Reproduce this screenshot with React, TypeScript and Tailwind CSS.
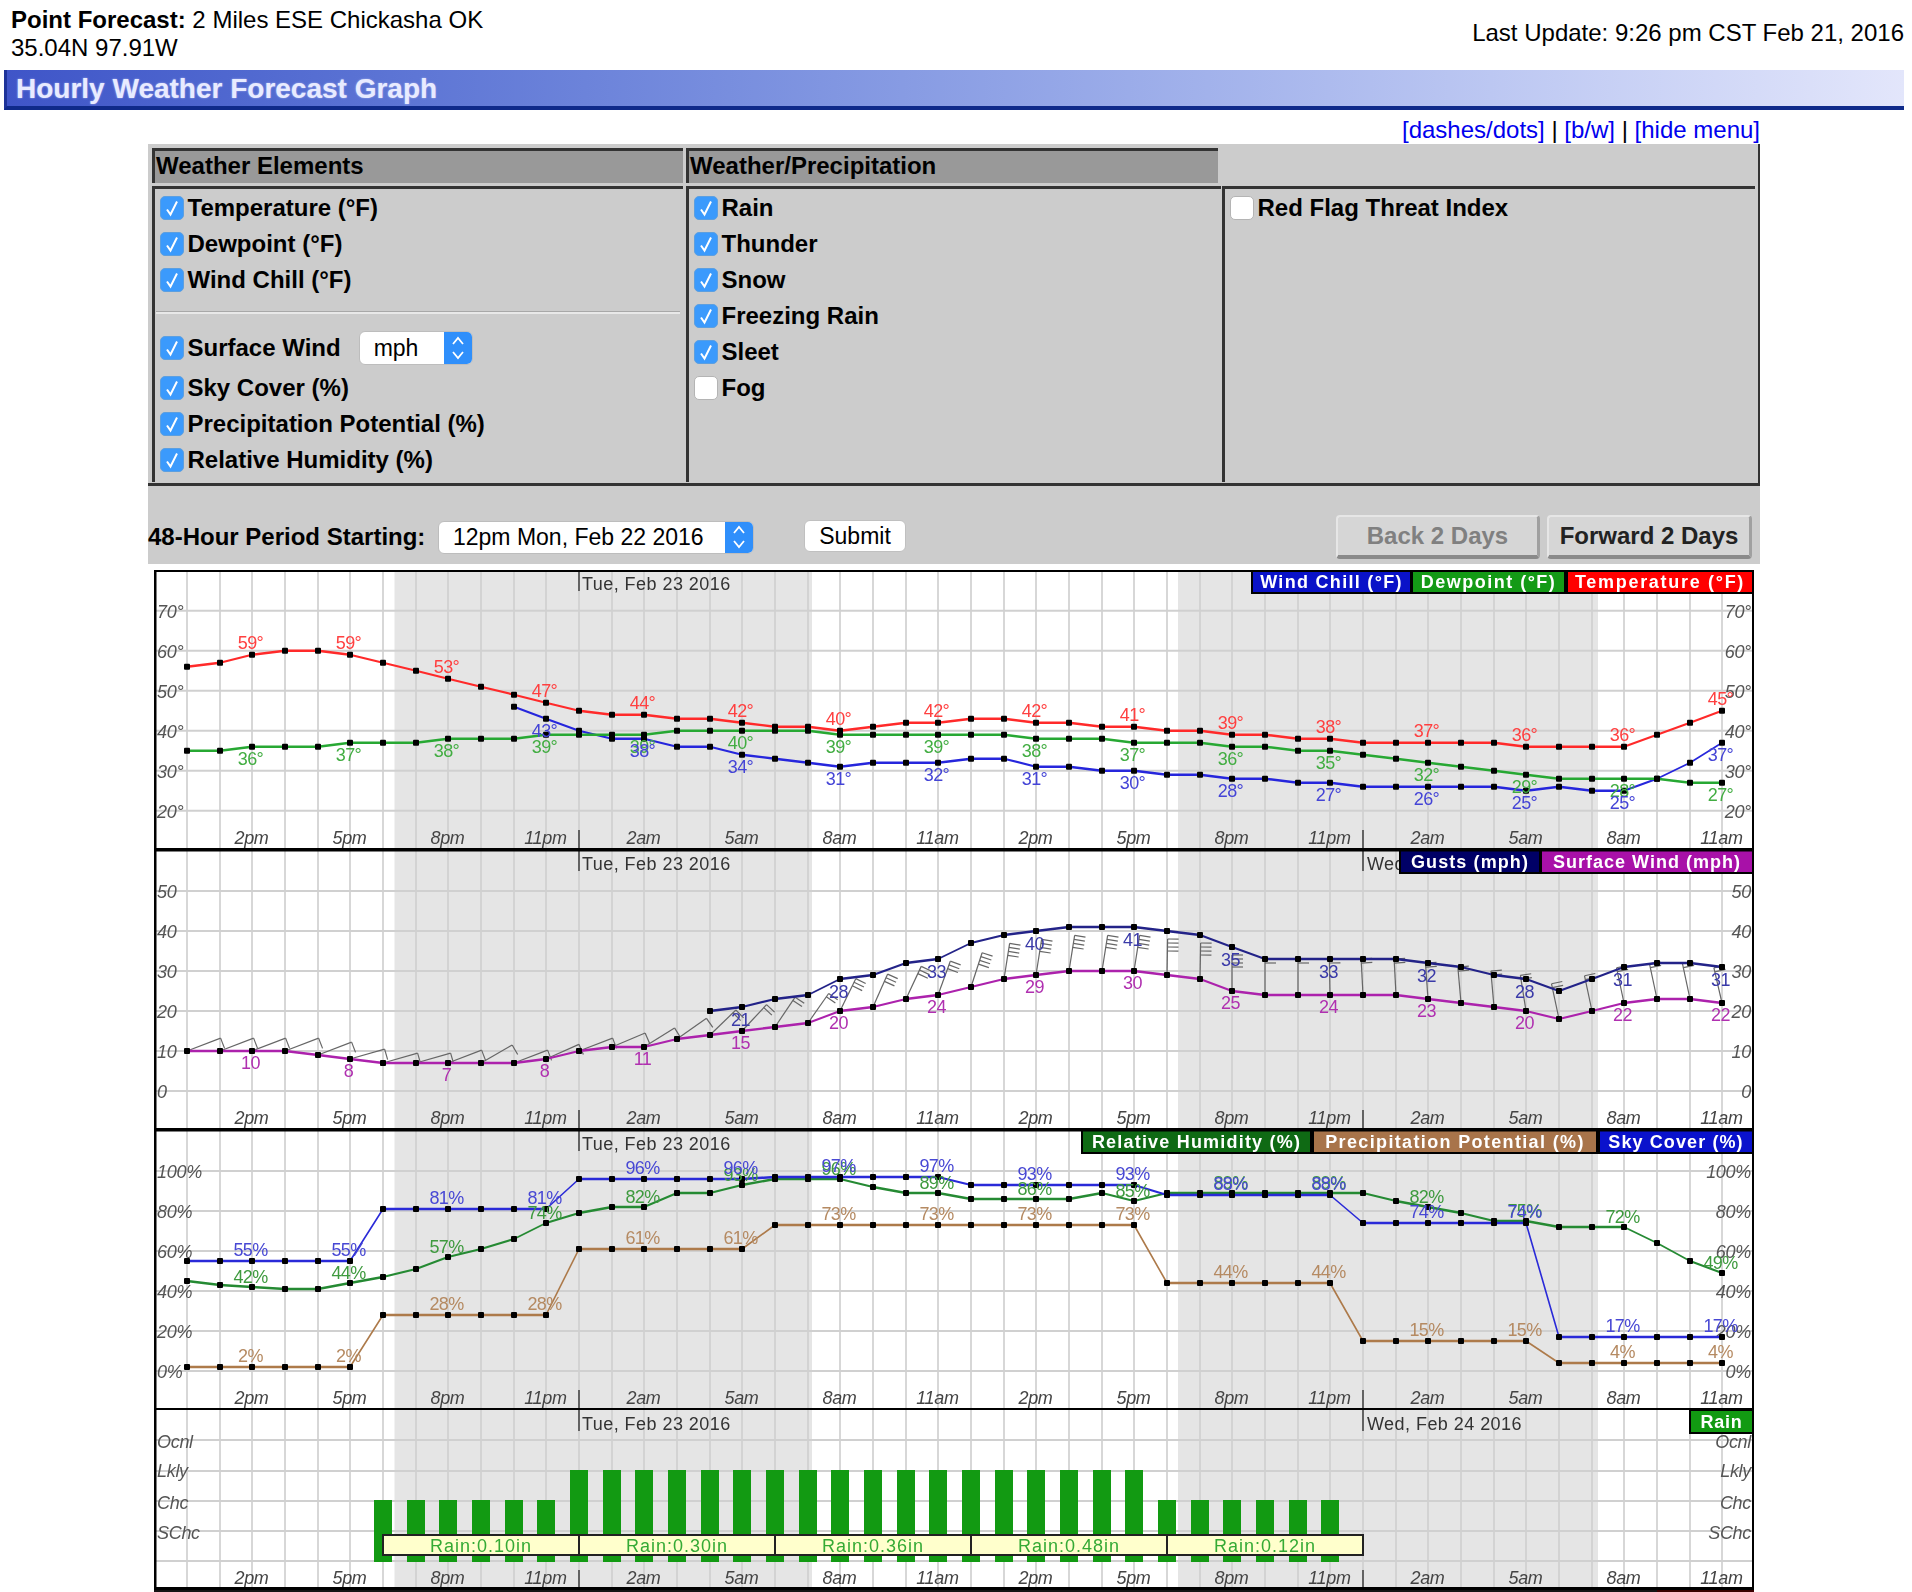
import React from "react";

const X = (i: number) => Math.round(187 + i * 32.67);
const HOURS = Array.from({ length: 48 }, (_, i) => i);
const LABEL_HOURS = HOURS.filter((i) => i % 3 === 2);
const TIME = ["2pm", "5pm", "8pm", "11pm", "2am", "5am", "8am", "11am", "2pm", "5pm", "8pm", "11pm", "2am", "5am", "8am", "11am"];

const temp = [56,57,59,60,60,59,57,55,53,51,49,47,45,44,44,43,43,42,41,41,40,41,42,42,43,43,42,42,41,41,40,40,39,39,38,38,37,37,37,37,37,36,36,36,36,39,42,45];
const dew = [35,35,36,36,36,37,37,37,38,38,38,39,39,39,39,40,40,40,40,40,39,39,39,39,39,39,38,38,38,37,37,37,36,36,35,35,34,33,32,31,30,29,28,28,28,28,27,27];
const chill = [null,null,null,null,null,null,null,null,null,null,46,43,40,38,38,36,36,34,33,32,31,32,32,32,33,33,31,31,30,30,29,29,28,28,27,27,26,26,26,26,26,25,26,25,25,28,32,37];
const wind = [10,10,10,10,9,8,7,7,7,7,7,8,10,11,11,13,14,15,16,17,20,21,23,24,26,28,29,30,30,30,29,28,25,24,24,24,24,24,23,22,21,20,18,20,22,23,23,22];
const gust = [null,null,null,null,null,null,null,null,null,null,null,null,null,null,null,null,20,21,23,24,28,29,32,33,37,39,40,41,41,41,40,39,36,33,33,33,33,33,32,31,29,28,25,28,31,32,32,31];
const barbAngle = [69,69,69,69,69,74,74,74,69,60,69,66,69,67,58,55,46,43,34,35,26,24,25,20,18,9,9,9,9,9,1,1,0,0,0,-1,-3,-3,-4,-5,-5,-9,-12,-12,-12,-12,-12,-13];
const sky = [55,55,55,55,55,55,81,81,81,81,81,81,96,96,96,96,96,96,97,97,97,97,97,97,93,93,93,93,93,93,88,88,88,88,88,88,74,74,74,74,74,74,17,17,17,17,17,17];
const rh = [45,43,42,41,41,44,47,51,57,61,66,74,79,82,82,89,89,93,96,96,96,92,89,89,86,86,86,86,89,85,89,89,89,89,89,89,89,85,82,79,75,75,72,72,72,64,55,49];
const precip = [2,2,2,2,2,2,28,28,28,28,28,28,61,61,61,61,61,61,73,73,73,73,73,73,73,73,73,73,73,73,44,44,44,44,44,44,15,15,15,15,15,15,4,4,4,4,4,4];

type Series = (number | null)[];

function Line({ data, y, color }: { data: Series; y: (v: number) => number; color: string }) {
  return (
    <>
      {data.map((v, i) => {
        const next = data[i + 1];
        if (v === null || next === null || next === undefined) return null;
        const dx = X(i + 1) - X(i);
        const dy = Math.abs(y(next) - y(v));
        const w = Math.max(1.6, 2.6 - (1.6 * dy) / dx);
        return <line key={i} x1={X(i)} y1={y(v)} x2={X(i + 1)} y2={y(next)} stroke={color} strokeWidth={w} strokeLinecap="round" />;
      })}
      {data.map((v, i) =>
        v === null ? null : <rect key={i} x={X(i) - 3} y={y(v) - 3} width={6} height={6} rx={1} fill="#000" />
      )}
    </>
  );
}

function Values({ data, y, color, dy, suffix = "" }: { data: Series; y: (v: number) => number; color: string; dy: number; suffix?: string }) {
  return (
    <>
      {LABEL_HOURS.map((i) => {
        const v = data[i];
        if (v === null) return null;
        return (
          <text key={i} x={X(i) - 1.5} y={y(v) + dy} textAnchor="middle" fontSize={18} letterSpacing={-0.6} fill={color}>
            {v}
            {suffix}
          </text>
        );
      })}
    </>
  );
}

function Legend({ x, w, bottom, top, fill, label, spacing }: { x: number; w: number; top: number; bottom: number; fill: string; label: string; spacing: number }) {
  return (
    <>
      <rect x={x} y={top} width={w} height={bottom - top} fill={fill} />
      <text x={x + w / 2} y={top === 572 ? top + 15.5 : top + 17} textAnchor="middle" fontSize={18} fontWeight="bold" letterSpacing={spacing} fill="#fff">
        {label}
      </text>
    </>
  );
}

function Frame({ top, height, plotBottom, gridY, children, wed = false }: { top: number; height: number; plotBottom: number; gridY: number[]; children: React.ReactNode; wed?: boolean }) {
  const axis = plotBottom - 6;
  return (
    <svg width={1600} height={height} viewBox={`154 ${top} 1600 ${height}`} className="block blur-[0.55px]" fontFamily="'Liberation Sans', Arial, sans-serif">
      <rect x={154} y={top} width={1600} height={height} fill="#fff" />
      <rect x={394.5} y={top} width={417.5} height={plotBottom - top} fill="#e5e5e5" />
      <rect x={1178} y={top} width={420} height={plotBottom - top} fill="#e5e5e5" />
      {HOURS.map((i) => (
        <line key={i} x1={X(i)} x2={X(i)} y1={top} y2={plotBottom} stroke="#d0d0d0" strokeWidth={1.7} />
      ))}
      {gridY.map((g) => (
        <line key={g} x1={156} x2={1752} y1={g} y2={g} stroke="#d0d0d0" strokeWidth={2} />
      ))}
      {[579, 1363].map((x, k) =>
        k === 0 || wed ? <line key={x} x1={x} x2={x} y1={top} y2={top + 21} stroke="#333" strokeWidth={1.4} /> : null
      )}
      {[579, 1363].map((x) => (
        <line key={x} x1={x} x2={x} y1={axis - 14} y2={plotBottom} stroke="#333" strokeWidth={1.4} />
      ))}
      <text x={582} y={top + 19.5} fontSize={18} letterSpacing={0.45} fill="#333">
        Tue, Feb 23 2016
      </text>
      {LABEL_HOURS.map((i, k) => (
        <text key={i} x={X(i) - 0.5} y={axis} textAnchor="middle" fontSize={18} fontStyle="italic" letterSpacing={-0.3} fill="#444">
          {TIME[k]}
        </text>
      ))}
      {children}
    </svg>
  );
}

function Borders({ top, height, last = false }: { top: number; height: number; last?: boolean }) {
  const bottom = top + height;
  return (
    <>
      <rect x={154} y={top} width={2.5} height={last ? 180 : height} fill="#000" />
      <rect x={1752} y={top} width={2} height={last ? 180 : height} fill="#000" />
      {last ? (
        <>
          <rect x={154} y={1587} width={1600} height={3} fill="#000" />
          <rect x={154} y={1590} width={1503} height={2} fill="#141414" />
          <rect x={1657} y={1590} width={97} height={2} fill="#3a0000" />
        </>
      ) : (
        <rect x={154} y={bottom - 2} width={1600} height={2} fill="#000" />
      )}
      {!last && <rect x={154} y={top} width={1600} height={top === 570 ? 2 : 1.5} fill="#000" />}
    </>
  );
}

function AxisLabels({ items, dy = 7 }: { items: [string, number][]; dy?: number }) {
  return (
    <>
      {items.map(([t, y]) => (
        <g key={t}>
          <text x={157} y={y + dy} fontSize={18} fontStyle="italic" letterSpacing={-0.3} fill="#555">
            {t}
          </text>
          <text x={1751} y={y + dy} textAnchor="end" fontSize={18} fontStyle="italic" letterSpacing={-0.3} fill="#555">
            {t}
          </text>
        </g>
      ))}
    </>
  );
}

function Barb({ i }: { i: number }) {
  const speed = wind[i];
  const a = (barbAngle[i] * Math.PI) / 180;
  const x0 = X(i);
  const y0 = 1091 - 4 * speed;
  const sx = Math.sin(a);
  const cx = Math.cos(a);
  const tipX = x0 + 36 * sx;
  const tipY = y0 - 36 * cx;
  const n = i >= 33 ? 2 : speed >= 25 ? 4 : speed >= 20 ? 3 : speed >= 14 ? 2 : 1;
  return (
    <g stroke="#666" strokeWidth={1.2} fill="none">
      <line x1={x0} y1={y0} x2={tipX} y2={tipY} />
      {Array.from({ length: n }, (_, k) => {
        const bx = tipX - k * 4 * sx;
        const by = tipY + k * 4 * cx;
        return <line key={k} x1={bx} y1={by} x2={bx + 11 * cx} y2={by + 11 * sx} />;
      })}
    </g>
  );
}

function TempChart() {
  const y = (v: number) => 610.7 + (70 - v) * 4;
  return (
    <Frame top={570} height={280} plotBottom={850} gridY={[70, 60, 50, 40, 30, 20].map(y)}>
      <AxisLabels items={[70, 60, 50, 40, 30, 20].map((v) => [`${v}°`, y(v)] as [string, number])} />
      <Line data={chill} y={y} color="#2626dc" />
      <Line data={dew} y={y} color="#27a833" />
      <Line data={temp} y={y} color="#ff2a2a" />
      <Values data={temp} y={y} color="#ff4040" dy={-6} suffix="°" />
      <Values data={dew} y={y} color="#42ad42" dy={18} suffix="°" />
      <Values data={chill} y={y} color="#4444d6" dy={18} suffix="°" />
      <rect x={1251} y={570} width={503} height={24} fill="#000" />
      <Legend x={1253} w={157} top={572} bottom={592} fill="#0a12c8" label="Wind Chill (°F)" spacing={1.3} />
      <Legend x={1413} w={151} top={572} bottom={592} fill="#149a16" label="Dewpoint (°F)" spacing={1.5} />
      <Legend x={1568} w={184} top={572} bottom={592} fill="#ff0000" label="Temperature (°F)" spacing={1.7} />
      <Borders top={570} height={280} />
    </Frame>
  );
}

function WindChart() {
  const y = (v: number) => 1091 - 4 * v;
  return (
    <Frame top={850} height={280} plotBottom={1130} gridY={[50, 40, 30, 20, 10, 0].map(y)} wed>
      <text x={1367} y={869.5} fontSize={18} letterSpacing={0.45} fill="#333">
        Wed
      </text>
      <AxisLabels items={[50, 40, 30, 20, 10, 0].map((v) => [`${v}`, y(v)] as [string, number])} />
      {HOURS.map((i) => (
        <Barb key={i} i={i} />
      ))}
      <Line data={gust} y={y} color="#232388" />
      <Line data={wind} y={y} color="#ac22ac" />
      <Values data={wind} y={y} color="#b030b0" dy={18} />
      {LABEL_HOURS.map((i) => {
        const v = gust[i];
        if (v === null) return null;
        return (
          <text key={i} x={X(i) - 1.5} y={y(v) + 19} textAnchor="middle" fontSize={18} letterSpacing={-0.6} fill="#3a3aa8">
            {i === 32 ? 35 : v}
          </text>
        );
      })}
      <rect x={1399} y={850} width={355} height={24} fill="#000" />
      <Legend x={1401} w={138} top={851} bottom={872} fill="#000066" label="Gusts (mph)" spacing={1.1} />
      <Legend x={1542} w={210} top={851} bottom={872} fill="#a811a8" label="Surface Wind (mph)" spacing={1} />
      <Borders top={850} height={280} />
    </Frame>
  );
}

function HumidityChart() {
  const y = (v: number) => 1371 - 2 * v;
  return (
    <Frame top={1130} height={280} plotBottom={1410} gridY={[100, 80, 60, 40, 20, 0].map(y)}>
      <AxisLabels items={[100, 80, 60, 40, 20, 0].map((v) => [`${v}%`, y(v)] as [string, number])} />
      <Line data={precip} y={y} color="#ad7a4a" />
      <Line data={rh} y={y} color="#258a33" />
      <Line data={sky} y={y} color="#2a2ad8" />
      <Values data={precip} y={y} color="#b58a62" dy={-5} suffix="%" />
      <Values data={rh} y={y} color="#3e9a3e" dy={-4} suffix="%" />
      <Values data={sky} y={y} color="#4848d4" dy={-5} suffix="%" />
      <rect x={1081} y={1130} width={673} height={24} fill="#000" />
      <Legend x={1083} w={227} top={1131} bottom={1152} fill="#0f6a14" label="Relative Humidity (%)" spacing={1.2} />
      <Legend x={1314} w={282} top={1131} bottom={1152} fill="#a8744a" label="Precipitation Potential (%)" spacing={1.35} />
      <Legend x={1600} w={152} top={1131} bottom={1152} fill="#0a12cc" label="Sky Cover (%)" spacing={1.1} />
      <Borders top={1130} height={280} />
    </Frame>
  );
}

function RainChart() {
  const rows: [string, number][] = [["Ocnl", 1441], ["Lkly", 1470], ["Chc", 1502], ["SChc", 1532]];
  const boxes = [
    [383, 579, "Rain:0.10in"],
    [579, 775, "Rain:0.30in"],
    [775, 971, "Rain:0.36in"],
    [971, 1167, "Rain:0.48in"],
    [1167, 1363, "Rain:0.12in"],
  ] as const;
  return (
    <Frame top={1410} height={182} plotBottom={1590} gridY={[1440, 1471, 1501, 1531, 1561]} wed>
      <text x={1367} y={1429.5} fontSize={18} letterSpacing={0.45} fill="#333">
        Wed, Feb 24 2016
      </text>
      <AxisLabels items={rows} />
      {HOURS.filter((i) => i >= 6 && i <= 35).map((i) => {
        const t = i >= 12 && i <= 29 ? 1470 : 1500;
        return <rect key={i} x={X(i) - 9} y={t} width={18} height={1562 - t} fill="#129a12" />;
      })}
      {boxes.map(([a, b, label]) => (
        <g key={a}>
          <rect x={a} y={1535} width={b - a} height={20} fill="#ffffcc" stroke="#222" strokeWidth={2} />
          <text x={(a + b) / 2} y={1551.5} textAnchor="middle" fontSize={18} letterSpacing={1} fill="#35aa35">
            {label}
          </text>
        </g>
      ))}
      <rect x={1689} y={1410} width={65} height={24} fill="#000" />
      <Legend x={1691} w={61} top={1411} bottom={1432} fill="#129a12" label="Rain" spacing={0.7} />
      <Borders top={1410} height={182} last />
    </Frame>
  );
}

function Check({ on = true }: { on?: boolean }) {
  return on ? (
    <span className="w-[24px] h-[24px] mr-[3.5px] shrink-0 rounded-[5px] bg-[#3b9afc] border border-[#5c9fe0] flex items-center justify-center">
      <svg width="18" height="20" viewBox="0 0 18 20" fill="none" stroke="#fff" strokeWidth="2">
        <path d="M4 11.5 L7.5 16.5 L14 3.5" />
      </svg>
    </span>
  ) : (
    <span className="w-[24px] h-[24px] mr-[3.5px] shrink-0 rounded-[5px] bg-white border border-[#b4b4b4]" />
  );
}

function Row({ label, on = true, children }: { label: string; on?: boolean; children?: React.ReactNode }) {
  return (
    <div className="flex items-center h-[36px]">
      <Check on={on} />
      <span className="text-[24px] font-bold text-black leading-[28px] whitespace-nowrap">{label}</span>
      {children}
    </div>
  );
}

function Stepper() {
  return (
    <span className="ml-auto w-[28px] h-full shrink-0 bg-[#2f8ffb] flex items-center justify-center">
      <svg width="14" height="26" viewBox="0 0 14 26" fill="none" stroke="#fff" strokeWidth="1.8">
        <path d="M2 9 L7 3 L12 9" />
        <path d="M2 17 L7 23 L12 17" />
      </svg>
    </span>
  );
}

export default function App() {
  return (
    <div className="w-[1912px] h-[1592px] overflow-hidden bg-white text-black font-['Liberation_Sans',Arial,sans-serif]">
      <header className="flex justify-between h-[70px] pt-[6px] pl-[11px] pr-[8px] text-[24px] leading-[28px]">
        <div>
          <div>
            <b>Point Forecast:</b> 2 Miles ESE Chickasha OK
          </div>
          <div>35.04N 97.91W</div>
        </div>
        <div className="pt-[13px]">Last Update: 9:26 pm CST Feb 21, 2016</div>
      </header>

      <div className="ml-[4px] w-[1900px] h-[40px] border-b-[4px] border-l-[3px] border-b-[#0f2a8a] border-l-[#1e3399] bg-gradient-to-r from-[#3f55c8] to-[#e3e6fb] pl-[9px] text-[28px] leading-[38px] font-bold text-[#e8ebff] [text-shadow:0_0_2px_#aab4ee]">
        Hourly Weather Forecast Graph
      </div>

      <div className="w-[1760px] h-[34px] pt-[6px] text-right text-[24px] leading-[28px]">
        <a className="text-[#0000ee]">[dashes/dots]</a> | <a className="text-[#0000ee]">[b/w]</a> | <a className="text-[#0000ee]">[hide menu]</a>
      </div>

      <section className="ml-[148px] w-[1612px] h-[420px] bg-[#cccccc]">
        <div className="h-[342px] pt-[4px] pl-[4px] border-b-[3px] border-r-[2px] border-[#333333] grid grid-cols-[534px_536px_1fr]">
          <div className="flex flex-col h-[334px]">
            <div className="h-[35px] mr-[3px] border-t-[3px] border-l-[3px] border-[#333333] bg-[#999999] pl-[1px] text-[24px] leading-[30px] font-bold">Weather Elements</div>
            <div className="mt-[3px] mr-[3px] h-[296px] border-t-[3px] border-l-[3px] border-[#333333] pl-[5px] pt-[1px]">
              <Row label="Temperature (°F)" />
              <Row label="Dewpoint (°F)" />
              <Row label="Wind Chill (°F)" />
              <div className="mt-[13px] -ml-[4px] mr-[3px] h-[3px] border-t border-[#a8a8a8] bg-[#e8e8e8]" />
              <div className="mt-[16px]">
                <Row label="Surface Wind">
                  <div className="ml-[18px] w-[114px] h-[34px] rounded-[6px] bg-white border border-[#bdbdbd] overflow-hidden flex items-center pl-[14px] text-[23px] leading-[28px]">
                    mph
                    <Stepper />
                  </div>
                </Row>
              </div>
              <div className="mt-[4px]">
                <Row label="Sky Cover (%)" />
                <Row label="Precipitation Potential (%)" />
                <Row label="Relative Humidity (%)" />
              </div>
            </div>
          </div>

          <div className="flex flex-col h-[334px]">
            <div className="h-[35px] mr-[4px] border-t-[3px] border-l-[3px] border-[#333333] bg-[#999999] pl-[1px] text-[24px] leading-[30px] font-bold">Weather/Precipitation</div>
            <div className="mt-[3px] mr-[1px] h-[296px] border-t-[3px] border-l-[3px] border-[#333333] pl-[5px] pt-[1px]">
              <Row label="Rain" />
              <Row label="Thunder" />
              <Row label="Snow" />
              <Row label="Freezing Rain" />
              <Row label="Sleet" />
              <Row label="Fog" on={false} />
            </div>
          </div>

          <div className="flex flex-col h-[334px]">
            <div className="h-[35px]" />
            <div className="mt-[3px] mr-[3px] h-[296px] border-t-[3px] border-l-[3px] border-[#333333] pl-[5px] pt-[1px]">
              <Row label="Red Flag Threat Index" on={false} />
            </div>
          </div>
        </div>

        <div className="flex items-center mt-[29px] h-[44px] pr-[8px]">
          <span className="text-[24px] font-bold leading-[28px] whitespace-nowrap w-[290px]">48-Hour Period Starting:</span>
          <div className="w-[316px] h-[33px] rounded-[6px] bg-white border border-[#bdbdbd] overflow-hidden flex items-center pl-[14px] text-[23px] leading-[28px]">
            12pm Mon, Feb 22 2016
            <Stepper />
          </div>
          <button className="ml-[50px] w-[102px] h-[32px] -mt-[2px] rounded-[6px] bg-white border border-[#c0c0c0] text-[23px] leading-[28px]">Submit</button>
          <button className="ml-auto w-[204px] h-[44px] rounded-[4px] bg-[#d6d6d6] border-t-[2px] border-l-[2px] border-b-[4px] border-r-[3px] border-t-[#e6e6e6] border-l-[#e6e6e6] border-b-[#8a8a8a] border-r-[#a0a0a0] text-[24px] font-bold leading-[28px] text-[#808080]">Back 2 Days</button>
          <button className="ml-[7px] w-[205px] h-[44px] rounded-[4px] bg-[#d6d6d6] border-t-[2px] border-l-[2px] border-b-[4px] border-r-[3px] border-t-[#e6e6e6] border-l-[#e6e6e6] border-b-[#8a8a8a] border-r-[#a0a0a0] text-[24px] font-bold leading-[28px] text-[#222222]">Forward 2 Days</button>
        </div>
      </section>

      <div className="ml-[154px] mt-[6px] w-[1600px] flex flex-col">
        <TempChart />
        <WindChart />
        <HumidityChart />
        <RainChart />
      </div>
    </div>
  );
}
